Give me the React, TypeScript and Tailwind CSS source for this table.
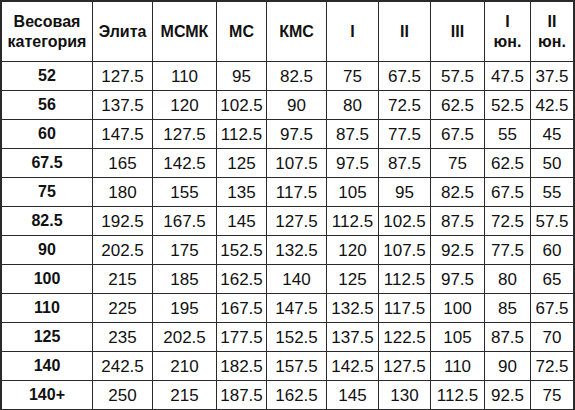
const headers = ["Весовая\nкатегория", "Элита", "МСМК", "МС", "КМС", "I", "II", "III", "I\nюн.", "II\nюн."];

const rows: string[][] = [
  ["52", "127.5", "110", "95", "82.5", "75", "67.5", "57.5", "47.5", "37.5"],
  ["56", "137.5", "120", "102.5", "90", "80", "72.5", "62.5", "52.5", "42.5"],
  ["60", "147.5", "127.5", "112.5", "97.5", "87.5", "77.5", "67.5", "55", "45"],
  ["67.5", "165", "142.5", "125", "107.5", "97.5", "87.5", "75", "62.5", "50"],
  ["75", "180", "155", "135", "117.5", "105", "95", "82.5", "67.5", "55"],
  ["82.5", "192.5", "167.5", "145", "127.5", "112.5", "102.5", "87.5", "72.5", "57.5"],
  ["90", "202.5", "175", "152.5", "132.5", "120", "107.5", "92.5", "77.5", "60"],
  ["100", "215", "185", "162.5", "140", "125", "112.5", "97.5", "80", "65"],
  ["110", "225", "195", "167.5", "147.5", "132.5", "117.5", "100", "85", "67.5"],
  ["125", "235", "202.5", "177.5", "152.5", "137.5", "122.5", "105", "87.5", "70"],
  ["140", "242.5", "210", "182.5", "157.5", "142.5", "127.5", "110", "90", "72.5"],
  ["140+", "250", "215", "187.5", "162.5", "145", "130", "112.5", "92.5", "75"],
];

export default function App() {
  return (
    <div className="w-[575px] h-[410px] bg-white font-['Liberation_Sans',Arial,sans-serif] text-[#111]">
      <div className="grid grid-cols-[90px_59px_63px_49px_59px_51px_51px_53px_45px_42px] grid-rows-[59px_repeat(12,28px)] gap-px bg-[#2a2a2a] border-t-2 border-l-2 border-r-2 border-b border-[#2a2a2a] w-[575px]">
        {headers.map((h, i) => (
          <div
            key={"h" + i}
            className="bg-white flex items-center justify-center text-center font-bold text-[16px] leading-[20px] whitespace-pre-line"
          >
            {h}
          </div>
        ))}
        {rows.map((r, ri) =>
          r.map((c, ci) => (
            <div
              key={ri + "-" + ci}
              className={
                "bg-white flex items-center justify-center leading-none " +
                (ci === 0 ? "font-bold text-[16px]" : "text-[17px]")
              }
            >
              {c}
            </div>
          ))
        )}
      </div>
    </div>
  );
}
